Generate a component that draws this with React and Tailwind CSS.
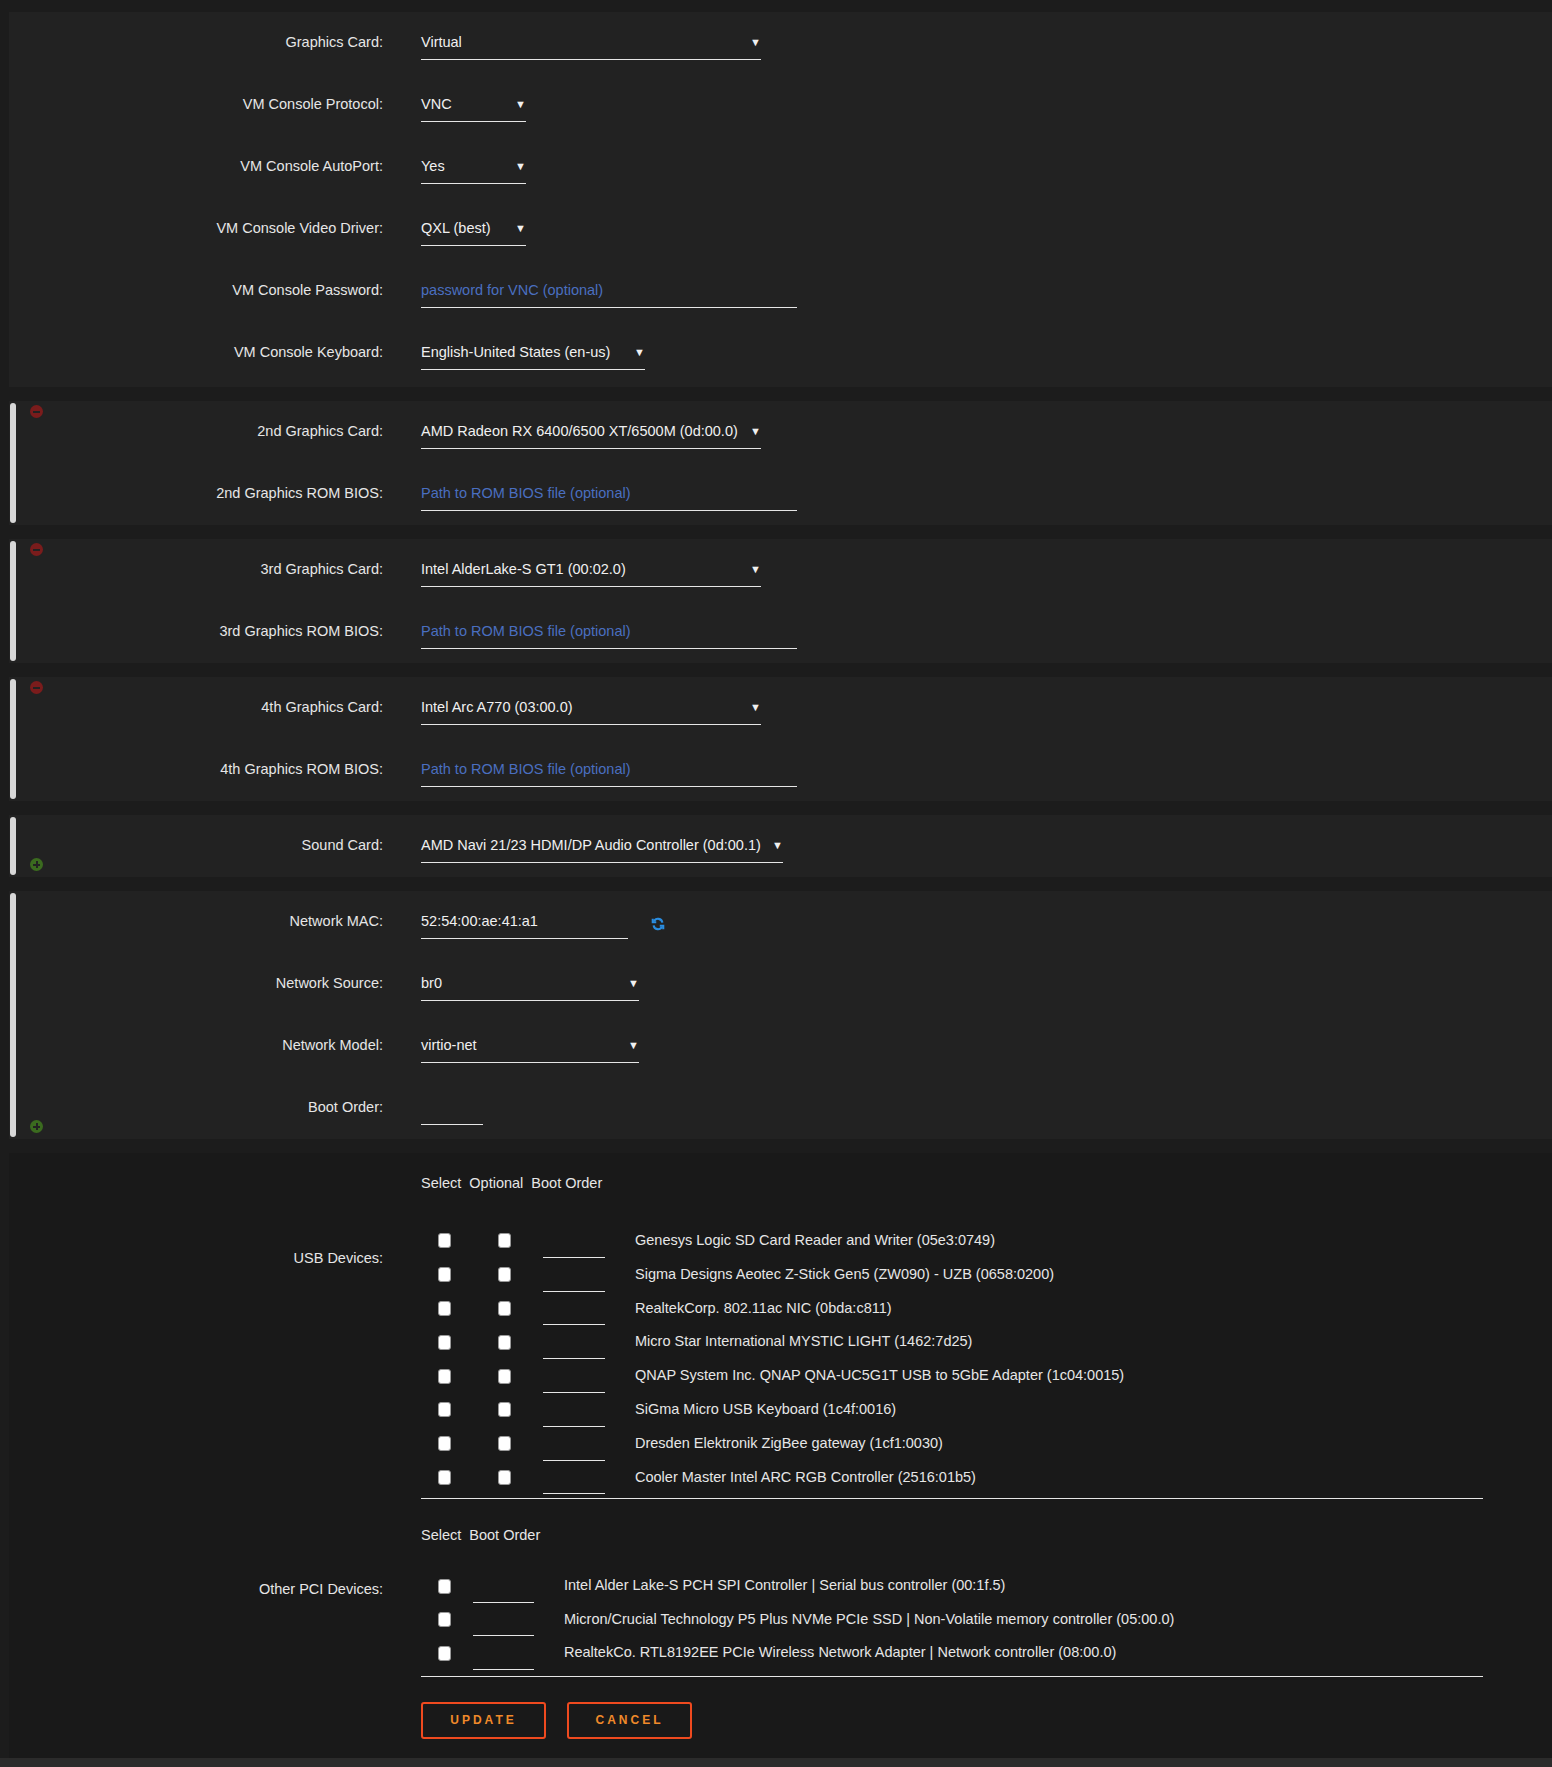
import React from "react";

const font = { fontFamily: '"Liberation Sans", "Noto Sans", sans-serif' };

function Row({ label, children }) {
  return (
    <div className="flex items-center h-[62px]">
      <div className="w-[374px] text-right text-[14.5px] text-[#e6e6e6] shrink-0">{label}</div>
      <div className="ml-[38px] flex items-center">{children}</div>
    </div>
  );
}

function Select({ value, w }) {
  return (
    <div className={`h-[34px] border-b border-[#e6e6e6] flex items-center justify-between text-[14.5px] text-[#f0f0f0] ${w}`}>
      <span>{value}</span>
      <span className="text-[11px]">▼</span>
    </div>
  );
}

function Input({ value, placeholder, w }) {
  return (
    <div className={`h-[34px] border-b border-[#e6e6e6] flex items-center text-[14.5px] ${w}`}>
      {value ? <span className="text-[#f0f0f0]">{value}</span> : <span className="text-[#4a6fc0]">{placeholder}</span>}
    </div>
  );
}

function Section({ children, minus, plus, bar = true }) {
  return (
    <div className="relative bg-[#222222] mt-[14px]">
      {bar && <div className="absolute left-[1px] top-[2px] bottom-[2px] w-[6px] rounded-full bg-[#d8d8d8]" />}
      {minus && (
        <div className="absolute left-[21px] top-[4px] w-[13px] h-[13px] rounded-full bg-[#7a1c1c] flex items-center justify-center">
          <div className="w-[7px] h-[2px] bg-[#222]" />
        </div>
      )}
      {plus && (
        <div className="absolute left-[21px] bottom-[6px] w-[13px] h-[13px] rounded-full bg-[#3b6b1f] flex items-center justify-center">
          <div className="relative w-[7px] h-[2px] bg-[#222]"><div className="absolute left-[2.5px] top-[-2.5px] w-[2px] h-[7px] bg-[#222]" /></div>
        </div>
      )}
      {children}
    </div>
  );
}

function Box() {
  return <div className="w-[13px] h-[15px] bg-white rounded-[3px] border border-[#999]" />;
}

const usb = [
  "Genesys Logic SD Card Reader and Writer (05e3:0749)",
  "Sigma Designs Aeotec Z-Stick Gen5 (ZW090) - UZB (0658:0200)",
  "RealtekCorp. 802.11ac NIC (0bda:c811)",
  "Micro Star International MYSTIC LIGHT (1462:7d25)",
  "QNAP System Inc. QNAP QNA-UC5G1T USB to 5GbE Adapter (1c04:0015)",
  "SiGma Micro USB Keyboard (1c4f:0016)",
  "Dresden Elektronik ZigBee gateway (1cf1:0030)",
  "Cooler Master Intel ARC RGB Controller (2516:01b5)",
];
const pci = [
  "Intel Alder Lake-S PCH SPI Controller | Serial bus controller (00:1f.5)",
  "Micron/Crucial Technology P5 Plus NVMe PCIe SSD | Non-Volatile memory controller (05:00.0)",
  "RealtekCo. RTL8192EE PCIe Wireless Network Adapter | Network controller (08:00.0)",
];

export default function App() {
  return (
    <div className="w-[1552px] h-[1767px] bg-[#1c1c1c] pl-[9px] pt-[12px] overflow-hidden" style={font}>
      <div className="bg-[#222222] h-[375px]">
        <Row label="Graphics Card:"><Select value="Virtual" w="w-[340px]" /></Row>
        <Row label="VM Console Protocol:"><Select value="VNC" w="w-[105px]" /></Row>
        <Row label="VM Console AutoPort:"><Select value="Yes" w="w-[105px]" /></Row>
        <Row label="VM Console Video Driver:"><Select value="QXL (best)" w="w-[105px]" /></Row>
        <Row label="VM Console Password:"><Input placeholder="password for VNC (optional)" w="w-[376px]" /></Row>
        <Row label="VM Console Keyboard:"><Select value="English-United States (en-us)" w="w-[224px]" /></Row>
      </div>
      <Section minus>
        <Row label="2nd Graphics Card:"><Select value="AMD Radeon RX 6400/6500 XT/6500M (0d:00.0)" w="w-[340px]" /></Row>
        <Row label="2nd Graphics ROM BIOS:"><Input placeholder="Path to ROM BIOS file (optional)" w="w-[376px]" /></Row>
      </Section>
      <Section minus>
        <Row label="3rd Graphics Card:"><Select value="Intel AlderLake-S GT1 (00:02.0)" w="w-[340px]" /></Row>
        <Row label="3rd Graphics ROM BIOS:"><Input placeholder="Path to ROM BIOS file (optional)" w="w-[376px]" /></Row>
      </Section>
      <Section minus>
        <Row label="4th Graphics Card:"><Select value="Intel Arc A770 (03:00.0)" w="w-[340px]" /></Row>
        <Row label="4th Graphics ROM BIOS:"><Input placeholder="Path to ROM BIOS file (optional)" w="w-[376px]" /></Row>
      </Section>
      <Section plus>
        <Row label="Sound Card:"><Select value="AMD Navi 21/23 HDMI/DP Audio Controller (0d:00.1)" w="w-[362px]" /></Row>
      </Section>
      <Section plus>
        <Row label="Network MAC:">
          <Input value="52:54:00:ae:41:a1" w="w-[207px]" />
          <svg className="ml-[23px] mt-[4px]" width="14" height="14" viewBox="0 0 16 16" fill="none" stroke="#2a8de0" strokeWidth="2.4">
            <path d="M13 6.5A5 5 0 0 0 3.5 5" />
            <path d="M3 9.5A5 5 0 0 0 12.5 11" />
            <path d="M2 2v4h4" fill="none" />
            <path d="M14 14v-4h-4" fill="none" />
          </svg>
        </Row>
        <Row label="Network Source:"><Select value="br0" w="w-[218px]" /></Row>
        <Row label="Network Model:"><Select value="virtio-net" w="w-[218px]" /></Row>
        <Row label="Boot Order:"><Input value=" " w="w-[62px]" /></Row>
      </Section>
      <div className="bg-[#191919] mt-[14px] h-[605px] text-[14.5px] text-[#e6e6e6]">
        <div className="pl-[412px] pt-[20px] h-[60px] flex gap-[8px]"><span>Select</span><span>Optional</span><span>Boot Order</span></div>
        <div className="flex">
          <div className="w-[374px] text-right pt-[35px]">USB Devices:</div>
          <div className="ml-[38px] pt-[11px] w-[1062px]">
            {usb.map((u) => (
              <div key={u} className="flex items-center h-[33.8px]">
                <div className="w-[60px] pl-[17px]"><Box /></div>
                <div className="w-[62px] pl-[17px]"><Box /></div>
                <div className="w-[62px] h-[33.8px] border-b border-[#e6e6e6]" />
                <span className="ml-[30px]">{u}</span>
              </div>
            ))}
            <div className="border-b border-[#e6e6e6] mt-[4px]" />
          </div>
        </div>
        <div className="pl-[412px] pt-[26px] h-[60px] flex gap-[8px]"><span>Select</span><span>Boot Order</span></div>
        <div className="flex">
          <div className="w-[374px] text-right pt-[20px]">Other PCI Devices:</div>
          <div className="ml-[38px] pt-[10px] w-[1062px]">
            {pci.map((u) => (
              <div key={u} className="flex items-center h-[33.5px]">
                <div className="w-[52px] pl-[17px]"><Box /></div>
                <div className="w-[61px] h-[33.5px] border-b border-[#e6e6e6]" />
                <span className="ml-[30px]">{u}</span>
              </div>
            ))}
            <div className="border-b border-[#e6e6e6] mt-[6px]" />
            <div className="flex gap-[21px] mt-[25px]">
              {["UPDATE", "CANCEL"].map((b) => (
                <div key={b} className="w-[125px] h-[37px] rounded-[3px] border-2 border-[#ef4a1f] flex items-center justify-center text-[12px] font-bold tracking-[3px] text-[#f08a2a]">{b}</div>
              ))}
            </div>
          </div>
        </div>
      </div>
      <div className="bg-[#2b2b2b] h-[20px] -ml-[9px]" />
    </div>
  );
}
